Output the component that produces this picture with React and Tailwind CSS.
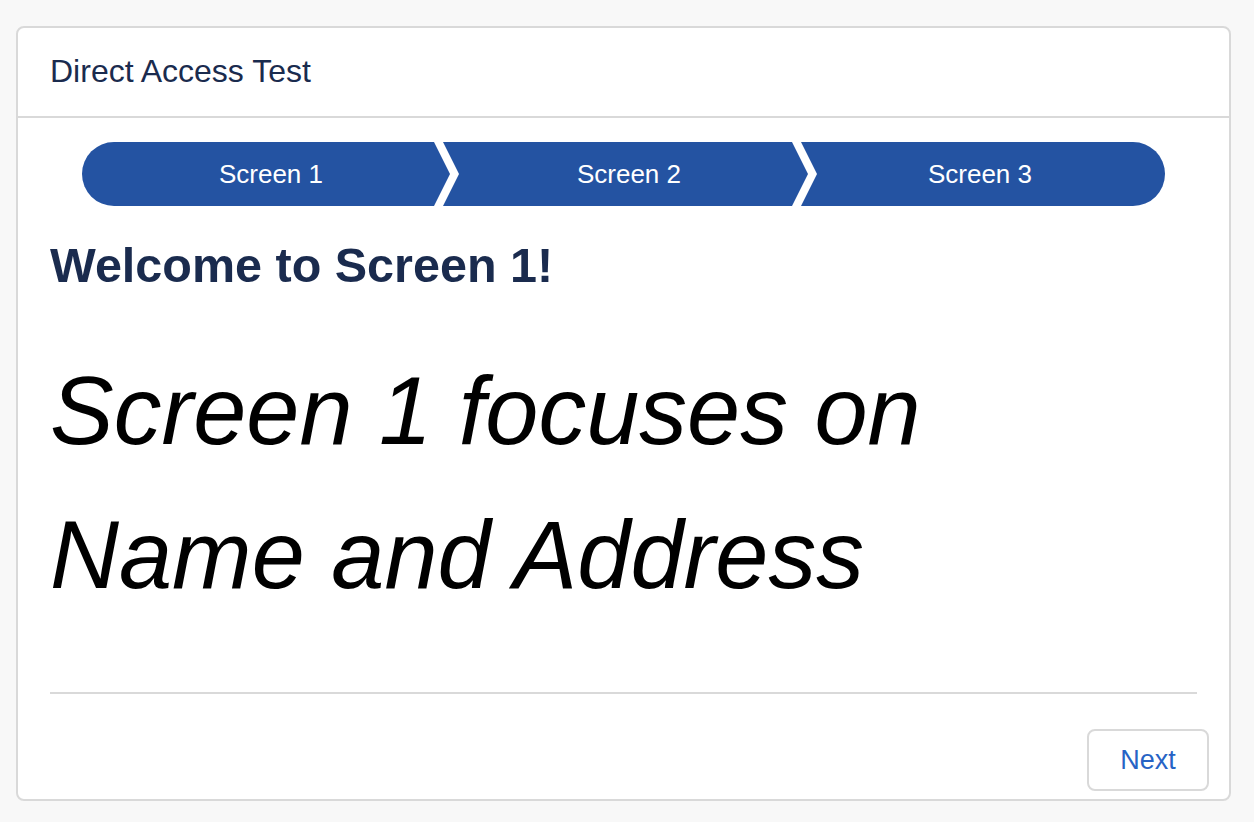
import React from "react";

const font = { fontFamily: '"Liberation Sans", Arial, sans-serif' };

export default function App() {
  return (
    <div className="min-h-screen w-full bg-[#f8f8f8] pt-[26px] pl-[16px] pr-[23px] pb-[21px]" style={font}>
      <div className="w-[1215px] rounded-[8px] border-2 border-[#d9d9d9] bg-white">
        <div className="flex h-[90px] items-center border-b-2 border-[#d9d9d9] px-[32px] pb-[2px]">
          <h1 className="text-[32px] leading-none text-[#1a2b4e]">Direct Access Test</h1>
        </div>

        <div className="px-[32px] pt-[24px]">
          <div className="mx-[32px] flex h-[64px]">
            <div className="flex flex-1 items-center justify-center rounded-l-full bg-[#2453a2] pl-[10px] text-[26px] text-white [clip-path:polygon(0_0,calc(100%_-_16px)_0,100%_50%,calc(100%_-_16px)_100%,0_100%)]">
              Screen 1
            </div>
            <div className="-ml-[7px] flex flex-1 items-center justify-center bg-[#2453a2] pl-[7px] text-[26px] text-white [clip-path:polygon(0_0,calc(100%_-_16px)_0,100%_50%,calc(100%_-_16px)_100%,0_100%,16px_50%)]">
              Screen 2
            </div>
            <div className="-ml-[7px] flex flex-1 items-center justify-center rounded-r-full bg-[#2453a2] pr-[6px] text-[26px] text-white [clip-path:polygon(0_0,100%_0,100%_100%,0_100%,16px_50%)]">
              Screen 3
            </div>
          </div>

          <h2 className="mt-[29px] text-[48.5px] font-bold leading-[60px] text-[#1a2b4e]">Welcome to Screen 1!</h2>

          <p className="mt-[44px] text-[95.5px] italic leading-[144px] text-black">
            Screen 1 focuses on
            <br />
            Name and Address
          </p>

          <div className="mt-[65px] h-[2px] bg-[#d9d9d9]" />
        </div>

        <div className="flex justify-end pt-[35px] pr-[20px] pb-[8px]">
          <button className="flex h-[62px] w-[122px] items-center justify-center rounded-[8px] border-2 border-[#d9d9d9] bg-white text-[27px] text-[#2763c5]">
            Next
          </button>
        </div>
      </div>
    </div>
  );
}
